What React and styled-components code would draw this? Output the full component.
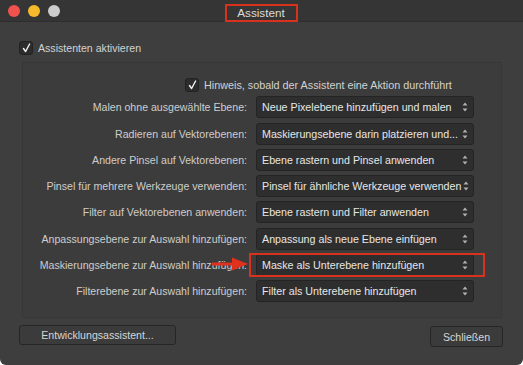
import React from 'react';
import styled, {createGlobalStyle} from 'styled-components';

const GlobalStyle = createGlobalStyle`
    html, body {
        margin: 0;
        padding: 0;
        background: #ffffff;
    }
    body {
        font-family: "Liberation Sans", Arial, sans-serif;
        font-size: 10.6px;
    }
`

const Window = styled.div`
    width: 523px;
    height: 365px;
    background: #3e3e3e;
    border-radius: 0 0 6px 6px;
    display: flex;
    flex-direction: column;
    overflow: hidden;
`

const TitleBar = styled.div`
    height: 21px;
    flex: none;
    background: #353535;
    border-bottom: 1px solid #2e2e2e;
    display: grid;
    grid-template-columns: 1fr auto 1fr;
    align-items: center;
`

const Lights = styled.div`
    display: flex;
    gap: 8px;
    padding-left: 8px;
    margin-top: 1px;
`

const Light = styled.span`
    width: 12px;
    height: 12px;
    border-radius: 50%;
    background: ${p => p.color};
`

const Title = styled.div`
    align-self: end;
    margin-bottom: -1px;
    height: 14px;
    padding: 0 11px 0 10px;
    border: 2px solid #d8321e;
    color: #dcdcdc;
    font-size: 11.7px;
    line-height: 13px;
    text-align: center;
`

const Content = styled.div`
    flex: 1;
    display: flex;
    flex-direction: column;
    padding: 19px 20px 0 19px;
`

const CheckRow = styled.label`
    display: flex;
    align-items: center;
    gap: 5px;
    height: 14px;
    color: #d2d2d2;
    padding-left: ${p => p.indent || 0}px;
    font-size: ${p => p.size || 10.6}px;
`

const Box = styled.span`
    width: 12px;
    height: 12px;
    border: 1px solid #222;
    border-radius: 3px;
    background: #2c2c2c;
    display: flex;
    align-items: center;
    justify-content: center;
`

const Panel = styled.div`
    margin: 7px 1px 0 3px;
    height: 256px;
    box-sizing: border-box;
    background: #3c3c3c;
    border: 1px solid #373737;
    padding: 15px 27px 0 10px;
    display: grid;
    grid-template-columns: 1fr 218px;
    grid-template-rows: 14px;
    grid-auto-rows: 22px;
    column-gap: 9px;
    row-gap: 4.3px;
`

const HintRow = styled.div`
    grid-column: 1 / 3;
    margin-bottom: 1px;
`

const Label = styled.div`
    color: #cdcdcd;
    text-align: right;
    white-space: nowrap;
    align-self: center;
`

const SelectWrap = styled.div`
    position: relative;
`

const Select = styled.div`
    height: 22px;
    box-sizing: border-box;
    background: #2e2e2e;
    border: 1px solid #242424;
    border-radius: 3px;
    color: #e6e6e6;
    padding: 0 5px 0 5px;
    display: flex;
    align-items: center;
    justify-content: space-between;
    gap: 2px;
    white-space: nowrap;
    font-size: 10.7px;
`

const Highlight = styled.div`
    position: absolute;
    left: -7px;
    right: -11px;
    top: -1px;
    bottom: -1px;
    border: 2px solid #d8321e;
    pointer-events: none;
`

const Pointer = styled.svg`
    position: absolute;
    left: -44px;
    top: 3px;
`

const Footer = styled.div`
    display: flex;
    justify-content: space-between;
    align-items: flex-start;
    margin-top: 7px;
`

const Button = styled.div`
    width: ${p => p.width}px;
    height: ${p => p.height}px;
    box-sizing: border-box;
    background: #3b3b3b;
    border: 1px solid #262626;
    border-radius: 3px;
    color: #d6d6d6;
    display: flex;
    align-items: center;
    justify-content: center;
    margin-top: ${p => p.offset || 0}px;
`

const Check = () => (
    <Box>
        <svg width="9" height="10" viewBox="0 0 9 10">
            <path d="M1.5 5.5 L3.6 8.5 L7.6 1" fill="none" stroke="#f2f2f2" strokeWidth="1.4" strokeLinecap="round" strokeLinejoin="round"/>
        </svg>
    </Box>
);

const Stepper = () => (
    <svg width="6" height="10" viewBox="0 0 6 10" style={{flex: 'none'}}>
        <path d="M3 0.5 L5.5 3.5 L0.5 3.5 Z" fill="#b0b0b0"/>
        <path d="M3 9.5 L5.5 6.5 L0.5 6.5 Z" fill="#b0b0b0"/>
    </svg>
);

const rows = [
    ['Malen ohne ausgewählte Ebene:', 'Neue Pixelebene hinzufügen und malen'],
    ['Radieren auf Vektorebenen:', 'Maskierungsebene darin platzieren und...'],
    ['Andere Pinsel auf Vektorebenen:', 'Ebene rastern und Pinsel anwenden'],
    ['Pinsel für mehrere Werkzeuge verwenden:', 'Pinsel für ähnliche Werkzeuge verwenden'],
    ['Filter auf Vektorebenen anwenden:', 'Ebene rastern und Filter anwenden'],
    ['Anpassungsebene zur Auswahl hinzufügen:', 'Anpassung als neue Ebene einfügen'],
    ['Maskierungsebene zur Auswahl hinzufügen:', 'Maske als Unterebene hinzufügen', true],
    ['Filterebene zur Auswahl hinzufügen:', 'Filter als Unterebene hinzufügen'],
];

export default function App() {
    return (
        <>
            <GlobalStyle/>
            <Window>
                <TitleBar>
                    <Lights>
                        <Light color="#f0524e"/>
                        <Light color="#f7b92c"/>
                        <Light color="#cdcdcd"/>
                    </Lights>
                    <Title>Assistent</Title>
                    <div/>
                </TitleBar>
                <Content>
                    <CheckRow>
                        <Check/>
                        Assistenten aktivieren
                    </CheckRow>
                    <Panel>
                        <HintRow>
                            <CheckRow indent={152} size={10.8}>
                                <Check/>
                                Hinweis, sobald der Assistent eine Aktion durchführt
                            </CheckRow>
                        </HintRow>
                        {rows.map(([label, value, marked]) => (
                            <React.Fragment key={label}>
                                <Label>{label}</Label>
                                <SelectWrap>
                                    <Select>
                                        <span>{value}</span>
                                        <Stepper/>
                                    </Select>
                                    {marked && <Highlight/>}
                                    {marked && (
                                        <Pointer width="36" height="14" viewBox="0 0 36 14">
                                            <path d="M0 7 L22 7" stroke="#e0301e" strokeWidth="3"/>
                                            <path d="M20 0.5 L36 7 L20 13.5 Z" fill="#e0301e"/>
                                        </Pointer>
                                    )}
                                </SelectWrap>
                            </React.Fragment>
                        ))}
                    </Panel>
                    <Footer>
                        <Button width={157} height={20}>Entwicklungsassistent...</Button>
                        <Button width={73} height={21} offset={1}>Schließen</Button>
                    </Footer>
                </Content>
            </Window>
        </>
    );
}
